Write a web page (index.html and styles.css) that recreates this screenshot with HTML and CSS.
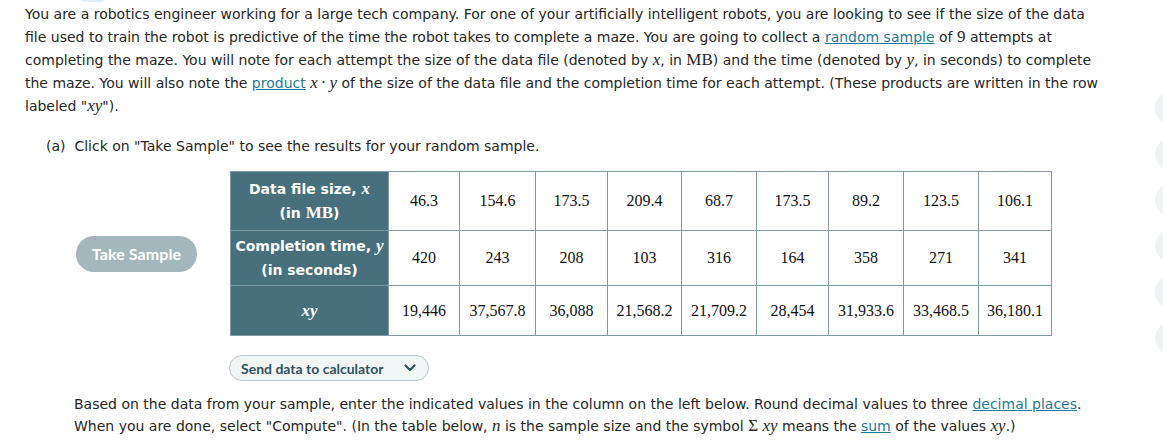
FILE: index.html
```html
<!DOCTYPE html>
<html>
<head>
<meta charset="utf-8">
<link rel="stylesheet" href="styles.css">
</head>
<body>
<div class="top-tab"></div>
<div class="page">
  <p class="intro">You are a robotics engineer working for a large tech company. For one of your artificially intelligent robots, you are looking to see if the size of the data file used to train the robot is predictive of the time the robot takes to complete a maze. You are going to collect a <a class="lnk">random sample</a> of <span class="num">9</span> attempts at completing the maze. You will note for each attempt the size of the data file (denoted by <i class="m">x</i>, in <span class="num">MB</span>) and the time (denoted by <i class="m">y</i>, in seconds) to complete the maze. You will also note the <a class="lnk">product</a> <i class="m">x</i><span class="num dot">·</span><i class="m">y</i> of the size of the data file and the completion time for each attempt. (These products are written in the row labeled "<i class="m">xy</i>").</p>

  <p class="part">(a)&nbsp; Click on "Take Sample" to see the results for your random sample.</p>

  <div class="sample-row">
    <div class="btn-col"><button class="take-btn">Take Sample</button></div>
    <table class="data">
      <tr class="r1">
        <th>Data file size, <i class="mb">x</i><br>(in <span class="sb">MB</span>)</th>
        <td>46.3</td><td>154.6</td><td>173.5</td><td>209.4</td><td>68.7</td><td>173.5</td><td>89.2</td><td>123.5</td><td>106.1</td>
      </tr>
      <tr class="r2">
        <th>Completion time, <i class="mb">y</i><br>(in seconds)</th>
        <td>420</td><td>243</td><td>208</td><td>103</td><td>316</td><td>164</td><td>358</td><td>271</td><td>341</td>
      </tr>
      <tr class="r3">
        <th><i class="mb">xy</i></th>
        <td>19,446</td><td>37,567.8</td><td>36,088</td><td>21,568.2</td><td>21,709.2</td><td>28,454</td><td>31,933.6</td><td>33,468.5</td><td>36,180.1</td>
      </tr>
    </table>
  </div>

  <div class="send-row">
    <button class="send-btn">Send data to calculator
      <svg class="chev" width="12" height="8" viewBox="0 0 12 8"><path d="M1.5 1.5 L6 6 L10.5 1.5" fill="none" stroke="#2f525e" stroke-width="2.2" stroke-linecap="round" stroke-linejoin="round"/></svg>
    </button>
  </div>

  <p class="based">Based on the data from your sample, enter the indicated values in the column on the left below. Round decimal values to three <a class="lnk">decimal places</a>.<br>When you are done, select "Compute". (In the table below, <i class="m">n</i> is the sample size and the symbol <span class="num">Σ</span> <i class="m">xy</i> means the <a class="lnk">sum</a> of the values <i class="m">xy</i>.)</p>
</div>
<div class="side-dots">
  <span></span><span></span><span></span><span></span><span></span><span></span>
</div>
</body>
</html>
```

FILE: styles.css
```css
html, body {
  margin: 0;
  padding: 0;
  background: #ffffff;
}
body {
  font-family: "DejaVu Sans", Verdana, sans-serif;
  font-size: 14px;
  color: #262626;
  position: relative;
  width: 1163px;
  height: 446px;
  overflow: hidden;
}
.top-tab {
  position: absolute;
  left: 80px;
  top: -8px;
  width: 26px;
  height: 10px;
  border-radius: 5px;
  background: #d8f0f6;
}
.page {
  padding: 3px 0 0 25px;
}
.intro {
  margin: 0;
  width: 1085px;
  line-height: 23px;
}
.lnk {
  color: #1f7a99;
  text-decoration: underline;
}
.m {
  font-family: "Liberation Serif", "Times New Roman", serif;
  font-style: italic;
  font-size: 17px;
  line-height: 1;
}
.num {
  font-family: "Liberation Serif", "Times New Roman", serif;
  font-size: 17px;
  line-height: 1;
}
.dot {
  padding: 0 3px;
}
.part {
  margin: 18px 0 0 21px;
  line-height: 20px;
}
.sample-row {
  display: flex;
  align-items: center;
  margin-top: 15px;
}
.btn-col {
  width: 205px;
  padding-left: 51px;
  box-sizing: border-box;
}
.take-btn {
  width: 121px;
  height: 36px;
  border: none;
  border-radius: 18px;
  background: #a3b7bd;
  color: #ffffff;
  font-family: Lato, "Open Sans", sans-serif;
  font-weight: 700;
  font-size: 16px;
  letter-spacing: 0.1px;
  padding: 0;
}
.data {
  border-collapse: collapse;
  font-family: "Liberation Serif", "Times New Roman", serif;
  font-size: 16px;
  color: #111;
}
.data th, .data td {
  border: 1px solid #7f9ca5;
  text-align: center;
  padding: 0;
}
.data th {
  background: #476f7c;
  color: #ffffff;
  font-family: "DejaVu Sans", Verdana, sans-serif;
  font-weight: 700;
  font-size: 14px;
  line-height: 24px;
  width: 157px;
}
.data td:nth-child(2) { width: 70px; }
.data td:nth-child(3) { width: 75px; }
.data td:nth-child(4) { width: 71px; }
.data td:nth-child(5) { width: 73px; }
.data td:nth-child(6) { width: 74px; }
.data td:nth-child(7) { width: 71px; }
.data td:nth-child(8) { width: 74px; }
.data td:nth-child(9) { width: 74px; }
.data td:nth-child(10) { width: 72px; }
.mb {
  font-family: "Liberation Serif", "Times New Roman", serif;
  font-style: italic;
  font-weight: 700;
  font-size: 17px;
}
.sb {
  font-family: "Liberation Serif", "Times New Roman", serif;
  font-weight: 700;
  font-size: 17px;
}
.r1 { height: 59px; }
.r2 { height: 55px; }
.r3 { height: 50px; }
.send-row {
  display: flex;
  margin-top: 19px;
  padding-left: 204px;
}
.send-btn {
  display: inline-flex;
  align-items: center;
  gap: 20px;
  height: 26px;
  padding: 0 12px 0 11px;
  border: 1px solid #b8c8cd;
  border-radius: 13px;
  background: #f3f6f7;
  color: #2f525e;
  font-family: Lato, "Open Sans", sans-serif;
  font-weight: 700;
  font-size: 14px;
}
.based {
  margin: 12px 0 0 49px;
  line-height: 22px;
}
.side-dots {
  position: absolute;
  right: -24px;
  top: 92px;
  display: flex;
  flex-direction: column;
  gap: 14px;
}
.side-dots span {
  display: block;
  width: 32px;
  height: 32px;
  border-radius: 50%;
  background: #f0f2f4;
}
```
